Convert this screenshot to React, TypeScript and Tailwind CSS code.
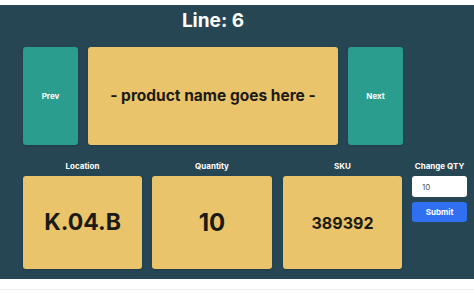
export default function App() {
  return (
    <div className="w-[474px] h-[293px] bg-white font-['Inter',sans-serif] overflow-hidden">
      <div className="h-[5px]" />
      <div className="bg-[#264653] h-[274px] pl-[23px]">
        <div className="pt-[2px] h-[30px] w-[380px]">
          <h1 className="text-center text-white font-bold text-[19px] leading-[28px]">Line: 6</h1>
        </div>

        <div className="mt-[12px] flex gap-[10px] h-[98px]">
          <button className="w-[55px] rounded-[3px] bg-[#2a9d8f] text-white font-bold text-[8px] shadow-sm">
            Prev
          </button>
          <div className="w-[250px] rounded-[3px] bg-[#e9c46a] flex items-center justify-center shadow-sm">
            <span className="text-[15.5px] font-bold text-[#1c1a14]">- product name goes here -</span>
          </div>
          <button className="w-[55px] rounded-[3px] bg-[#2a9d8f] text-white font-bold text-[8px] shadow-sm">
            Next
          </button>
        </div>

        <div className="mt-[15px] flex">
          <Stat label="Location" value="K.04.B" size="text-[23px]" w="w-[119px]" />
          <div className="w-[10px]" />
          <Stat label="Quantity" value="10" size="text-[24px]" w="w-[120px]" />
          <div className="w-[11px]" />
          <Stat label="SKU" value="389392" size="text-[16px]" w="w-[119px]" />
          <div className="w-[10px]" />
          <div className="w-[55px] flex flex-col">
            <span className="h-[12px] text-[8px] leading-[12px] font-bold text-white text-center">
              Change QTY
            </span>
            <input
              defaultValue="10"
              className="mt-[4px] h-[21px] w-full rounded-[3px] bg-white px-[10px] text-[8px] text-[#555] outline-none"
            />
            <button className="mt-[5px] h-[20px] w-full rounded-[3px] bg-[#2f6ff0] text-white font-bold text-[8px]">
              Submit
            </button>
          </div>
        </div>
      </div>
      <div className="mt-[10px] border-t border-[#ececec]" />
    </div>
  )
}

function Stat({ label, value, size, w }: { label: string; value: string; size: string; w: string }) {
  return (
    <div className={`${w} flex flex-col`}>
      <span className="h-[12px] text-[8px] leading-[12px] font-bold text-white text-center">{label}</span>
      <div className="mt-[4px] h-[93px] rounded-[3px] bg-[#e9c46a] flex items-center justify-center shadow-sm">
        <span className={`${size} font-bold text-[#1c1a14]`}>{value}</span>
      </div>
    </div>
  )
}
